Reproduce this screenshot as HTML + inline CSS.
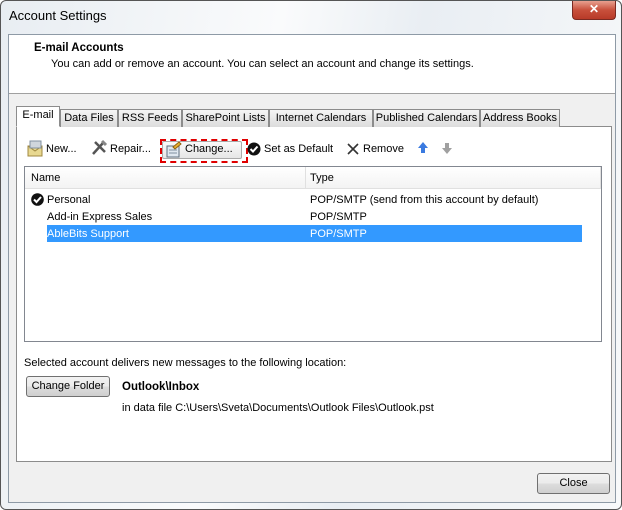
<!DOCTYPE html>
<html><head><style>
*{margin:0;padding:0;box-sizing:border-box}
body{width:622px;height:510px;overflow:hidden;font-family:"Liberation Sans",sans-serif;font-size:11px;color:#000;background:#fff}
.win{position:absolute;left:0;top:0;width:622px;height:510px;border:1px solid #555;border-radius:6px;background:linear-gradient(100deg,#e8edf2 0%,#fafbfc 40%,#e9eef3 60%,#f8f9fa 100%)}
.title{position:absolute;left:8px;top:7px;font-size:13px}
.xbtn{position:absolute;left:571px;top:0;width:44px;height:19px;border:1px solid #7a2a22;border-top:none;border-radius:0 0 4px 4px;background:linear-gradient(#e8a090,#c8503c 50%,#b83a28);color:#fff;font-weight:bold;text-align:center;font-size:12px;line-height:17px}
.client{position:absolute;left:7px;top:33px;width:608px;height:469px;border:1px solid #8e9aa6;background:#f0f0f0}
.hdr{position:absolute;left:0;top:0;width:606px;height:59px;background:#fff;border-bottom:1px solid #a0a0a0}
.abs{position:absolute;white-space:nowrap}
.tab{position:absolute;top:74px;height:18px;border:1px solid #8c8c8c;border-bottom:none;background:linear-gradient(#f5f5f5,#dcdcdc);padding:2px 0 0;font-size:11px;white-space:nowrap;overflow:hidden;text-align:center}
.panel{position:absolute;left:7px;top:91px;width:596px;height:336px;border:1px solid #8c8c8c;background:#fff}
.list{position:absolute;left:15px;top:131px;width:578px;height:176px;border:1px solid #828790;background:#fff}
.lh{position:absolute;left:0;top:0;width:576px;height:22px;background:linear-gradient(#fff,#f3f3f3);border-bottom:1px solid #e0e0e0}
.btn{position:absolute;border:1px solid #707070;border-radius:3px;background:linear-gradient(#f2f2f2,#ebebeb 50%,#dddddd 51%,#cfcfcf);text-align:center;font-size:11px;white-space:nowrap}
</style></head><body>
<div class="win">
<div class="title">Account Settings</div>
<div class="xbtn">✕</div>
<div class="client">
 <div class="hdr">
  <div class="abs" style="left:25px;top:7px;font-weight:bold;font-size:11.5px">E-mail Accounts</div>
  <div class="abs" style="left:42px;top:23px">You can add or remove an account. You can select an account and change its settings.</div>
 </div>
 <div class="panel"></div>
 <div class="tab" style="left:7px;top:71px;height:21px;background:#fff;border-bottom:1px solid #fff;width:44px">E-mail</div>
 <div class="tab" style="left:51px;width:58px">Data Files</div>
 <div class="tab" style="left:109px;width:64px">RSS Feeds</div>
 <div class="tab" style="left:173px;width:87px">SharePoint Lists</div>
 <div class="tab" style="left:260px;width:104px">Internet Calendars</div>
 <div class="tab" style="left:364px;width:107px">Published Calendars</div>
 <div class="tab" style="left:471px;width:80px">Address Books</div>
 <svg class="abs" style="left:18px;top:105px" width="18" height="18"><rect x="1" y="6" width="14" height="10" fill="#e8d890" stroke="#a08840"/><path d="M1 6l7 5 7-5" fill="none" stroke="#a08840"/><rect x="3" y="1" width="11" height="7" fill="#cfd6dc" stroke="#8090a0"/></svg>
 <div class="abs" style="left:37px;top:108px">New...</div>
 <svg class="abs" style="left:81px;top:104px" width="18" height="18"><path d="M3 15L13 4M5 3l10 10" stroke="#555" stroke-width="2.5"/><path d="M12 2l4 4" stroke="#888" stroke-width="3"/></svg>
 <div class="abs" style="left:101px;top:108px">Repair...</div>
 <div class="abs" style="left:151px;top:104px;width:88px;height:24px;border:2px dashed #e00000"></div>
 <div class="abs" style="left:153px;top:106px;width:80px;height:18px;border:1px solid #aaa;border-radius:2px;background:linear-gradient(#fafafa,#e6e6e6)"></div>
 <svg class="abs" style="left:156px;top:106px" width="18" height="18"><rect x="2" y="5" width="12" height="11" fill="#e0e8f0" stroke="#607080"/><path d="M4 9h8M4 12h8" stroke="#8090a0"/><path d="M8 6l6-5 2 2-6 5z" fill="#e8b030" stroke="#906010"/></svg>
 <div class="abs" style="left:176px;top:108px">Change...</div>
 <svg class="abs" style="left:238px;top:107px" width="14" height="14"><circle cx="7" cy="7" r="6.5" fill="#111"/><path d="M3.5 7l2.5 2.5 4.5-5" stroke="#fff" stroke-width="2" fill="none"/></svg>
 <div class="abs" style="left:255px;top:108px">Set as Default</div>
 <svg class="abs" style="left:337px;top:107px" width="14" height="14"><path d="M2 2l10 10M12 2L2 12" stroke="#333" stroke-width="1.6"/></svg>
 <div class="abs" style="left:354px;top:108px">Remove</div>
 <svg class="abs" style="left:408px;top:106px" width="12" height="14"><path d="M6 1l5 6H8v5H4V7H1z" fill="#3a7ae0"/></svg>
 <svg class="abs" style="left:432px;top:106px" width="12" height="14"><path d="M6 13l5-6H8V2H4v5H1z" fill="#a0a0a0"/></svg>
 <div class="list">
  <div class="lh"></div>
  <div class="abs" style="left:280px;top:0;width:1px;height:22px;background:#e0e0e0"></div>
  <div class="abs" style="left:575px;top:0;width:1px;height:22px;background:#e0e0e0"></div>
  <div class="abs" style="left:6px;top:5px">Name</div>
  <div class="abs" style="left:285px;top:5px">Type</div>
  <svg class="abs" style="left:6px;top:26px" width="13" height="13"><circle cx="6.5" cy="6.5" r="6.3" fill="#111"/><path d="M3 6.5l2.5 2.5 4.5-5" stroke="#fff" stroke-width="2" fill="none"/></svg>
  <div class="abs" style="left:22px;top:27px">Personal</div>
  <div class="abs" style="left:285px;top:27px">POP/SMTP (send from this account by default)</div>
  <div class="abs" style="left:22px;top:44px">Add-in Express Sales</div>
  <div class="abs" style="left:285px;top:44px">POP/SMTP</div>
  <div class="abs" style="left:22px;top:58px;width:535px;height:17px;background:#3399ff"></div>
  <div class="abs" style="left:22px;top:61px;color:#fff">AbleBits Support</div>
  <div class="abs" style="left:285px;top:61px;color:#fff">POP/SMTP</div>
 </div>
 <div class="abs" style="left:15px;top:322px">Selected account delivers new messages to the following location:</div>
 <div class="btn" style="left:17px;top:341px;width:84px;height:21px;line-height:19px">Change Folder</div>
 <div class="abs" style="left:113px;top:346px;font-weight:bold;font-size:11.5px">Outlook\Inbox</div>
 <div class="abs" style="left:113px;top:367px">in data file C:\Users\Sveta\Documents\Outlook Files\Outlook.pst</div>
 <div class="btn" style="left:528px;top:438px;width:73px;height:21px;line-height:19px">Close</div>
</div>
</div>
</body></html>
